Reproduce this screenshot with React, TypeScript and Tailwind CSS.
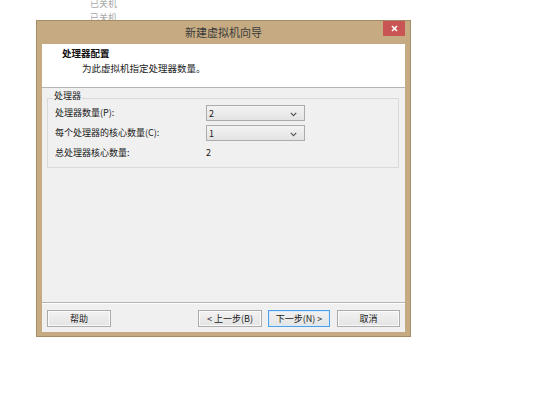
export default function App() {
  const Chevron = () => (
    <svg width="7" height="5" viewBox="0 0 7 5" className="absolute right-[7px] top-[6px]">
      <path d="M0.8 0.8 L3.5 3.6 L6.2 0.8" fill="none" stroke="#555" strokeWidth="1.2" />
    </svg>
  );
  const Select = ({ value }: { value: string }) => (
    <div className="relative w-[99px] h-[16px] border border-[#acacac] bg-gradient-to-b from-[#f3f3f3] to-[#e3e3e3] pl-[2px] flex items-center text-[9px] leading-none text-[#1a1a1a]">
      {value}
      <Chevron />
    </div>
  );
  const Btn = ({ label, w, primary }: { label: string; w: string; primary?: boolean }) => (
    <div
      className={
        "h-[17px] flex items-center justify-center text-[9px] leading-none text-[#1a1a1a] border bg-gradient-to-b from-[#f2f2f2] to-[#e4e4e4] " +
        w +
        (primary ? " border-[#4f9fe8] shadow-[inset_0_0_0_1px_#d6ebfb]" : " border-[#acacac] shadow-[inset_0_0_0_1px_#fafafa]")
      }
    >
      {label}
    </div>
  );
  return (
    <div className="relative w-[554px] h-[407px] bg-white overflow-hidden font-['Noto_Sans_CJK_SC','Noto_Sans',sans-serif]">
      <div className="pl-[90px] -mt-[3px] text-[9px] leading-[14px] text-[#a8a8a8]">
        <div>已关机</div>
        <div>已关机</div>
      </div>

      <div className="absolute left-[36px] top-[20px] w-[375px] h-[317px] border border-[#a48c66] bg-[#c6ab82] flex flex-col">
        <div className="relative h-[23px] flex items-center justify-center text-[11px] leading-none text-[#3a3a3a]">
          新建虚拟机向导
          <div className="absolute right-[5px] top-0 w-[22px] h-[15px] bg-[#c95454] flex items-center justify-center">
            <svg width="7" height="7" viewBox="0 0 7 7">
              <path d="M1 1 L6 6 M6 1 L1 6" stroke="#fff" strokeWidth="1.6" />
            </svg>
          </div>
        </div>

        <div className="mx-[5px] mb-[4px] flex-1 flex flex-col bg-[#f0f0f0]">
          <div className="h-[40px] bg-white pt-[3px] border-b border-[#b4b4b4] box-content">
            <div className="pl-[20px] h-[12px] leading-[12px] text-[9.5px] font-bold text-[#111]">处理器配置</div>
            <div className="pl-[40px] mt-[3px] h-[12px] leading-[12px] text-[9.5px] text-[#222]">为此虚拟机指定处理器数量。</div>
          </div>
          <div className="flex-1 pt-[10px] pl-[5px] pr-[6px] border-b border-[#b4b4b4]">
            <div className="relative h-[70px] border border-[#dadada]">
              <div className="absolute left-[5px] -top-[9px] px-px bg-[#f0f0f0] text-[9px] leading-[12px] text-[#1a1a1a]">处理器</div>
              <div className="pt-[4px] pl-[7px] text-[9px] text-[#1a1a1a]">
                <div className="h-[20px] grid grid-cols-[151px_auto] items-center">
                  <div>处理器数量(P):</div>
                  <Select value="2" />
                </div>
                <div className="h-[20px] grid grid-cols-[151px_auto] items-center">
                  <div>每个处理器的核心数量(C):</div>
                  <Select value="1" />
                </div>
                <div className="h-[20px] grid grid-cols-[151px_auto] items-center">
                  <div>总处理器核心数量:</div>
                  <div>2</div>
                </div>
              </div>
            </div>
          </div>
          <div className="h-[29px] border-t border-white flex items-center px-[5px]">
            <Btn label="帮助" w="w-[64px]" />
            <div className="flex-1" />
            <Btn label="< 上一步(B)" w="w-[64px]" />
            <div className="w-[6px]" />
            <Btn label="下一步(N) >" w="w-[62px]" primary />
            <div className="w-[7px]" />
            <Btn label="取消" w="w-[63px]" />
          </div>
        </div>
      </div>
    </div>
  );
}
